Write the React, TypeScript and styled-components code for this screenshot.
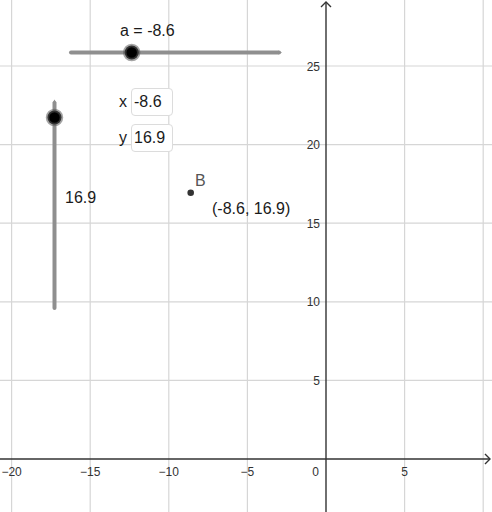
import styled, { createGlobalStyle } from "styled-components";

const GlobalStyle = createGlobalStyle`
  html, body {
    margin: 0;
    padding: 0;
    background: #ffffff;
  }
  body {
    font-family: "Liberation Sans", Arial, sans-serif;
  }
`;

// graph coordinates -> pixels
const OX = 326;
const OY = 459;
const S = 15.72;
const px = (x: number) => OX + x * S;
const py = (y: number) => OY - y * S;

const W = 492;
const H = 512;

const xTicks = [-20, -15, -10, -5, 5, 10];
const yTicks = [5, 10, 15, 20, 25];

const fmt = (n: number) => (n < 0 ? "\u2212" + Math.abs(n) : String(n));

const App = () => {
  return (
    <>
      <GlobalStyle />
      <Canvas>
        <Plot width={W} height={H} viewBox={`0 0 ${W} ${H}`}>
          {xTicks.map((t) => (
            <line key={"gx" + t} x1={px(t)} y1={0} x2={px(t)} y2={H} className="grid" />
          ))}
          {yTicks.map((t) => (
            <line key={"gy" + t} x1={0} y1={py(t)} x2={W} y2={py(t)} className="grid" />
          ))}

          <line x1={0} y1={OY} x2={W - 2} y2={OY} className="axis" />
          <polyline points={`${W - 7},${OY - 5} ${W - 2},${OY} ${W - 7},${OY + 5}`} className="axis" />
          <line x1={OX} y1={H} x2={OX} y2={2} className="axis" />
          <polyline points={`${OX - 5},${7} ${OX},${2} ${OX + 5},${7}`} className="axis" />

          {xTicks
            .filter((t) => t !== 10)
            .map((t) => (
              <text key={"tx" + t} x={px(t)} y={OY + 17} textAnchor="middle" className="tick">
                {fmt(t)}
              </text>
            ))}
          <text x={OX - 7} y={OY + 17} textAnchor="end" className="tick">
            0
          </text>
          {yTicks.map((t) => (
            <text key={"ty" + t} x={OX - 6} y={py(t) + 4.5} textAnchor="end" className="tick">
              {t}
            </text>
          ))}

          {/* slider a */}
          <line x1={71} y1={52.5} x2={279} y2={52.5} className="track" />
          <polygon points="278,50.5 282,52.5 278,54.5" className="trackTip" />
          <circle cx={131.7} cy={52.5} r={7} className="knob" />

          {/* vertical slider */}
          <line x1={54.5} y1={103} x2={54.5} y2={308} className="track" />
          <polygon points="52.5,103 54.5,99.5 56.5,103" className="trackTip" />
          <circle cx={54.5} cy={117.5} r={7} className="knob" />

          {/* point B */}
          <circle cx={190.7} cy={192.8} r={3.3} fill="#333333" />
        </Plot>

        <Label $x={120} $y={22}>a = -8.6</Label>
        <Label $x={65} $y={189}>16.9</Label>
        <Label $x={195} $y={172} $color="#555555">B</Label>
        <Label $x={212} $y={200}>(-8.6, 16.9)</Label>

        <Field $y={88}>
          <FieldName>x</FieldName>
          <FieldBox>-8.6</FieldBox>
        </Field>
        <Field $y={124}>
          <FieldName>y</FieldName>
          <FieldBox>16.9</FieldBox>
        </Field>
      </Canvas>
    </>
  );
};

export default App;

const Canvas = styled.div`
  position: relative;
  width: ${W}px;
  height: ${H}px;
  overflow: hidden;
  background: #ffffff;
`;

const Plot = styled.svg`
  display: block;

  .grid {
    stroke: #d6d6d6;
    stroke-width: 1.2;
  }
  .axis {
    stroke: #333333;
    stroke-width: 1.4;
    fill: none;
  }
  .tick {
    font-family: "Liberation Sans", Arial, sans-serif;
    font-size: 12px;
    fill: #333333;
  }
  .track {
    stroke: #8f8f8f;
    stroke-width: 4;
    stroke-linecap: round;
  }
  .trackTip {
    fill: #8f8f8f;
    stroke: none;
  }
  .knob {
    fill: #000000;
    stroke: rgba(90, 90, 90, 0.55);
    stroke-width: 3.5;
  }
`;

const Label = styled.div<{ $x: number; $y: number; $color?: string }>`
  position: absolute;
  left: ${(p) => p.$x}px;
  top: ${(p) => p.$y}px;
  font-size: 16px;
  line-height: 18px;
  color: ${(p) => p.$color ?? "#1a1a1a"};
  white-space: nowrap;
`;

const Field = styled.div<{ $y: number }>`
  position: absolute;
  left: 119px;
  top: ${(p) => p.$y}px;
  display: flex;
  align-items: center;
  gap: 1px;
`;

const FieldName = styled.span`
  font-size: 16px;
  color: #1a1a1a;
  width: 11px;
`;

const FieldBox = styled.div`
  box-sizing: border-box;
  width: 42px;
  height: 28px;
  padding: 0 3px 0 2px;
  display: flex;
  align-items: center;
  border: 1px solid #dcdcdc;
  border-radius: 4px;
  background: #ffffff;
  font-size: 16px;
  color: #1a1a1a;
`;
